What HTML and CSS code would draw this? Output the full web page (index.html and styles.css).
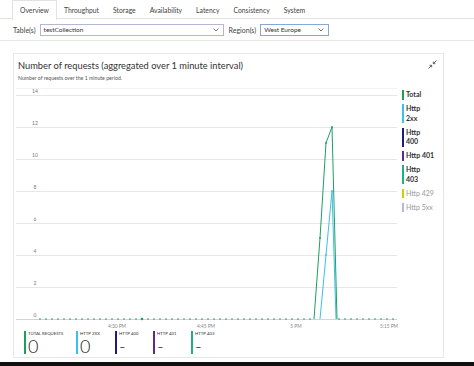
FILE: index.html
```html
<!DOCTYPE html>
<html>
<head>
    <meta charset="utf-8">
    <title>Metrics - Requests</title>
    <link rel="stylesheet" href="styles.css">
</head>
<body>
    <div class="tabs">
        <span class="tab on">Overview</span>
        <span class="tab">Throughput</span>
        <span class="tab">Storage</span>
        <span class="tab">Availability</span>
        <span class="tab">Latency</span>
        <span class="tab">Consistency</span>
        <span class="tab">System</span>
    </div>
    <div class="filters">
        <span class="lbl">Table(s)</span>
        <div class="select sel-table">
            <span>testCollection</span>
            <svg class="chev" width="6" height="4" viewBox="0 0 6 4"><path d="M0.5 0.5 L3 3 L5.5 0.5" fill="none" stroke="#555" stroke-width="0.8"/></svg>
        </div>
        <span class="lbl">Region(s)</span>
        <div class="select sel-region">
            <span>West Europe</span>
            <svg class="chev" width="6" height="4" viewBox="0 0 6 4"><path d="M0.5 0.5 L3 3 L5.5 0.5" fill="none" stroke="#555" stroke-width="0.8"/></svg>
        </div>
    </div>
    <div class="card">
        <div class="card-head">
            <div class="title">Number of requests (aggregated over 1 minute interval)</div>
            <svg class="collapse" width="9" height="9" viewBox="0 0 9 9">
                <path d="M8.5 0.5 L5.3 3.7 M5.3 1.6 L5.3 3.7 L7.4 3.7" fill="none" stroke="#555" stroke-width="0.9"/>
                <path d="M0.5 8.5 L3.7 5.3 M1.6 5.3 L3.7 5.3 L3.7 7.4" fill="none" stroke="#555" stroke-width="0.9"/>
            </svg>
        </div>
        <div class="sub">Number of requests over the 1 minute period.</div>
        <div class="chart-row">
            <svg class="chart" width="386" height="242" viewBox="0 0 386 242">
                <g stroke="#e6e6e6" stroke-width="1">
                    <line x1="2" y1="0.5" x2="383" y2="0.5" stroke="#f2f2f2"/>
                    <line x1="2" y1="7.5" x2="383" y2="7.5"/>
                    <line x1="2" y1="39.5" x2="383" y2="39.5"/>
                    <line x1="2" y1="71.5" x2="383" y2="71.5"/>
                    <line x1="2" y1="103.5" x2="383" y2="103.5"/>
                    <line x1="2" y1="135.5" x2="383" y2="135.5"/>
                    <line x1="2" y1="167.5" x2="383" y2="167.5"/>
                    <line x1="2" y1="199.5" x2="383" y2="199.5"/>
                    <line x1="2" y1="231.5" x2="383" y2="231.5" stroke="#d4d4d4"/>
                </g>
                <g class="ylab" text-anchor="middle">
                    <text x="21" y="5">14</text>
                    <text x="21" y="37">12</text>
                    <text x="21" y="69">10</text>
                    <text x="21" y="101">8</text>
                    <text x="21" y="133">6</text>
                    <text x="21" y="165">4</text>
                    <text x="21" y="197">2</text>
                    <text x="21" y="229">0</text>
                </g>
                <g class="xlab" text-anchor="middle">
                    <text x="103" y="240">4:30 PM</text>
                    <text x="192" y="240">4:45 PM</text>
                    <text x="282" y="240">5 PM</text>
                    <text x="375" y="240">5:15 PM</text>
                </g>
                <line x1="25" y1="231" x2="299" y2="231" stroke="#23a47a" stroke-width="1" stroke-dasharray="2 4"/>
                <line x1="324" y1="231" x2="383" y2="231" stroke="#23a47a" stroke-width="1" stroke-dasharray="2 4"/>
                <circle cx="128" cy="231" r="1.3" fill="#1e9e56"/>
                <polyline points="306,231 312,167 318,103 322,231" fill="none" stroke="#3cc0ea" stroke-width="1"/>
                <polyline points="300,231 306,150 312,55 318,39 323,231" fill="none" stroke="#1e9e66" stroke-width="1"/>
                <g fill="#1e9e66">
                    <circle cx="306" cy="150" r="0.9"/>
                    <circle cx="312" cy="55" r="0.9"/>
                    <circle cx="318" cy="39" r="0.9"/>
                </g>
                <g fill="#3cc0ea">
                    <circle cx="312" cy="167" r="0.9"/>
                    <circle cx="318" cy="103" r="0.9"/>
                </g>
            </svg>
            <ul class="legend">
                <li class="lg-total">Total</li>
                <li class="lg-2xx">Http<br>2xx</li>
                <li class="lg-400">Http<br>400</li>
                <li class="lg-401">Http 401</li>
                <li class="lg-403">Http<br>403</li>
                <li class="lg-429 off">Http 429</li>
                <li class="lg-5xx off">Http 5xx</li>
            </ul>
        </div>
        <div class="stats">
            <div class="stat st-total"><div class="k">TOTAL REQUESTS</div><div class="v">0</div></div>
            <div class="stat st-2xx"><div class="k">HTTP 2XX</div><div class="v">0</div></div>
            <div class="stat st-400"><div class="k">HTTP 400</div><div class="v">-</div></div>
            <div class="stat st-401"><div class="k">HTTP 401</div><div class="v">-</div></div>
            <div class="stat st-403"><div class="k">HTTP 403</div><div class="v">-</div></div>
        </div>
    </div>
    <div class="footbar"></div>
</body>
</html>
```
FILE: styles.css
```css
body { margin: 0; font-family: Lato, "Open Sans", sans-serif; color: #333; background: #fff; }
.tabs { display: flex; height: 19px; padding-left: 12px; border-bottom: 1px solid #e3e3e3; box-sizing: border-box; }
.tab { font-size: 6.8px; line-height: 18px; padding: 0 6px; color: #444; border: 1px solid transparent; border-bottom: none; }
.tab.on { border-color: #e3e3e3; background: #fff; height: 19px; padding: 0 7px; }
.filters { display: flex; align-items: center; height: 22px; padding-left: 13px; border-bottom: 1px solid #e6e6e6; box-sizing: border-box; }
.lbl { font-size: 7px; color: #444; margin-right: 4px; }
.select { display: flex; align-items: center; justify-content: space-between; height: 10px; border: 1px solid #b5b5d6; padding: 0 4px 0 3px; font-size: 6.5px; color: #333; }
.sel-table { width: 175px; margin-right: 5px; }
.sel-region { width: 60px; border-color: #86a8d8; }
.card { margin: 12px 0 0 13px; width: 431px; height: 305px; border: 1px solid #e8e8e8; box-sizing: border-box; }
.card-head { display: flex; justify-content: space-between; align-items: flex-start; padding: 5px 6px 0 4px; height: 20px; box-sizing: border-box; }
.title { font-size: 9.3px; line-height: 14px; color: #333; }
.collapse { display: block; margin-top: 1px; }
.sub { font-size: 5.2px; color: #555; padding: 1px 0 0 4px; height: 14px; box-sizing: border-box; }
.chart-row { display: flex; }
.chart { display: block; flex: none; }
.ylab { font-size: 5px; fill: #777; }
.xlab { font-size: 4.8px; fill: #888; }
.legend { list-style: none; margin: 2px 0 0 2px; padding: 0; }
.legend li { font-size: 7px; line-height: 9.5px; font-weight: 700; color: #333; border-left: 2px solid; padding-left: 2px; margin-bottom: 4.5px; }
.legend li.off { font-weight: 400; color: #999; }
.lg-total { border-color: #1e9e56 !important; }
.lg-2xx { border-color: #3cc0ea !important; }
.lg-400 { border-color: #1c1c80 !important; }
.lg-401 { border-color: #5b2c8c !important; }
.lg-403 { border-color: #1fb08a !important; }
.lg-429 { border-color: #c8d400 !important; }
.lg-5xx { border-color: #b6b6da !important; }
.stats { display: flex; padding: 0 0 0 10px; }
.stat { border-left: 2px solid; padding-left: 2px; height: 23px; margin-top: 1px; }
.stat .k { font-size: 4.3px; line-height: 5px; color: #333; white-space: nowrap; }
.stat .v { font-size: 18px; line-height: 22px; height: 18px; font-weight: 300; color: #222; margin-top: -1px; }
.st-total { width: 48px; border-color: #1e9e56; }
.st-2xx { width: 35px; border-color: #3cc0ea; }
.st-400 { width: 34px; border-color: #1c1c80; }
.st-401 { width: 34px; border-color: #5b2c8c; }
.st-403 { width: 34px; border-color: #1fb08a; }
.footbar { margin-top: 4px; height: 10px; background: #111; }
```
